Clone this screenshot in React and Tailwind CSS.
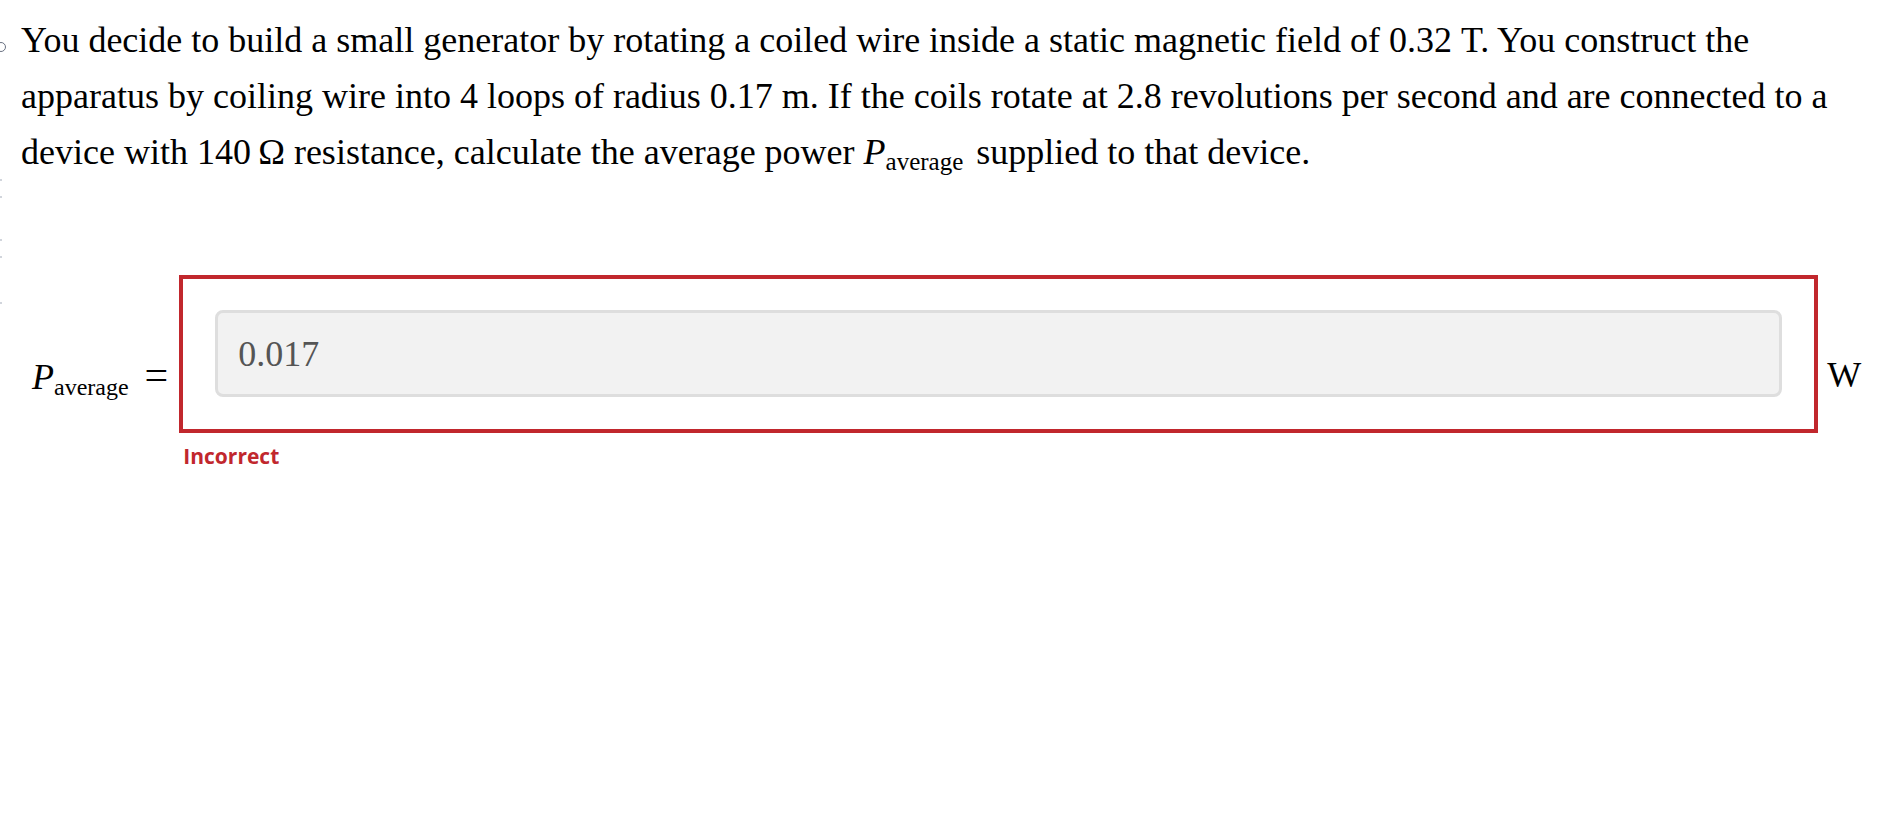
export default function App() {
    const serif = "font-['Liberation_Serif','Times_New_Roman',serif]";

    const Pavg = ({ sub = "text-[25px]" }) => (
        <span className="whitespace-nowrap">
            <span className="italic">P</span>
            <span className={`${sub} relative top-[6px]`}>average</span>
        </span>
    );

    return (
        <div className={`relative w-[1889px] h-[831px] bg-white text-black overflow-hidden ${serif}`}>
            {/* clipped marker at the left edge */}
            <div className="absolute left-[-4px] top-[42px] w-[10px] h-[10px] rounded-full border-[1.5px] border-gray-500"></div>
            <div className="absolute left-0 top-[179px] w-[2px] h-[2px] bg-gray-300"></div>
            <div className="absolute left-0 top-[196px] w-[2px] h-[2px] bg-gray-300"></div>
            <div className="absolute left-0 top-[239px] w-[2px] h-[2px] bg-gray-300"></div>
            <div className="absolute left-0 top-[256px] w-[2px] h-[2px] bg-gray-300"></div>
            <div className="absolute left-0 top-[302px] w-[2px] h-[2px] bg-gray-300"></div>

            {/* Question text */}
            <div className="pl-[21px] pt-[12px] text-[36px] leading-[56px]">
                <div className="whitespace-nowrap">
                    You decide to build a small generator by rotating a coiled wire inside a static magnetic field of 0.32&nbsp;T. You construct the
                </div>
                <div className="whitespace-nowrap">
                    apparatus by coiling wire into 4 loops of radius 0.17&nbsp;m. If the coils rotate at 2.8 revolutions per second and are connected to a
                </div>
                <div className="whitespace-nowrap">
                    device with 140&thinsp;Ω resistance, calculate the average power <Pavg /><span className="ml-[13px]">supplied to that device.</span>
                </div>
            </div>

            {/* Answer row */}
            <div className="flex items-start mt-[91px] pl-[32px]">
                <div className="flex items-baseline mt-[79px] text-[36px] leading-none">
                    <Pavg sub="text-[24px]" />
                    <span className="ml-[16px] mr-[11px] text-[42px]">=</span>
                </div>
                <div className="flex flex-col">
                    <div className="w-[1639px] h-[158px] border-[4px] border-[#c1272d] px-[32px] pt-[31px]">
                        <div className="h-[87px] rounded-[8px] border-[3px] border-[#dedede] bg-[#f2f2f2] flex items-center pl-[20px] text-[36px] text-[#555]">
                            0.017
                        </div>
                    </div>
                    <div className="mt-[8px] font-['Open_Sans','Noto_Sans',sans-serif] font-bold text-[21px] text-[#c1272d] pl-[4px]">
                        Incorrect
                    </div>
                </div>
                <div className="mt-[82px] ml-[9px] text-[36px] leading-none">W</div>
            </div>
        </div>
    );
}
